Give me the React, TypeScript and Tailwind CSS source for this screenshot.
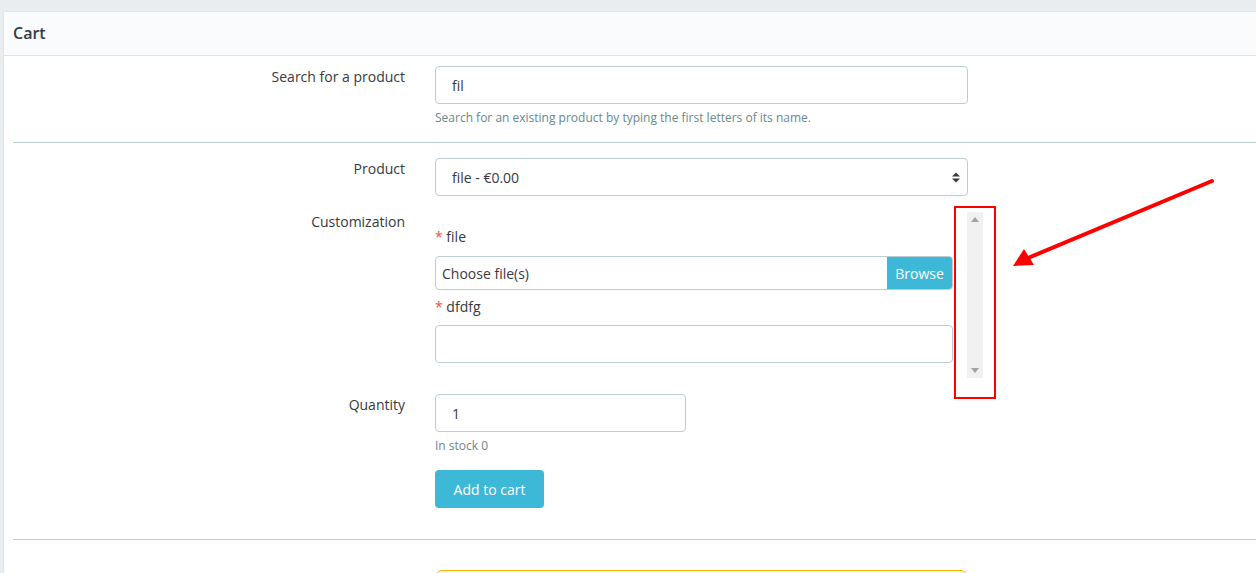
import React from "react";

const Label = ({ children, pt = "pt-[1px]" }: { children: React.ReactNode; pt?: string }) => (
  <div className={`w-[422px] shrink-0 pr-[30px] text-right text-[14px] leading-[20px] text-[#363a41] ${pt}`}>
    {children}
  </div>
);

const Req = ({ children }: { children: React.ReactNode }) => (
  <div className="text-[14px] leading-[20px] text-[#363a41]">
    <span className="text-[#f54c3e]">*</span> {children}
  </div>
);

export default function App() {
  return (
    <div
      className="relative h-[573px] w-[1256px] overflow-hidden bg-[#eaedef] pl-[3px] pt-[11px]"
      style={{ fontFamily: '"Open Sans", "Noto Sans", sans-serif' }}
    >
      <div className="h-[600px] w-[1260px] rounded-tl-[4px] border-l border-t border-[#dbe6e9] bg-white">
        <div className="flex h-[44px] items-center border-b border-[#dbe6e9] bg-[#fafbfc] px-[9px] pb-[1px] text-[16px] font-semibold text-[#363a41]">
          Cart
        </div>
        <div className="pl-[9px] pt-[10px]">
          {/* Search */}
          <div className="flex">
            <Label>Search for a product</Label>
            <div>
              <div className="flex h-[38px] w-[533px] items-center rounded-[4px] border border-[#bbcdd2] px-[16px] text-[14px] text-[#363a41]">
                fil
              </div>
              <div className="mt-[5px] text-[12px] leading-[18px] text-[#6c868e]">
                Search for an existing product by typing the first letters of its name.
              </div>
            </div>
          </div>
          <div className="mt-[15px] h-px bg-[#bbcdd2]" />

          {/* Product */}
          <div className="mt-[15px] flex">
            <Label>Product</Label>
            <div className="flex h-[38px] w-[533px] items-center justify-between rounded-[4px] border border-[#bbcdd2] pl-[16px] pr-[7px] text-[14px] text-[#363a41]">
              <span>file - €0.00</span>
              <svg width="8" height="11" viewBox="0 0 8 11">
                <path d="M0 4.5 L4 0.5 L8 4.5 Z" fill="#363a41" />
                <path d="M0 6.5 L4 10.5 L8 6.5 Z" fill="#363a41" />
              </svg>
            </div>
          </div>

          {/* Customization */}
          <div className="mt-[16px] flex">
            <Label pt="pt-0">Customization</Label>
            <div className="flex h-[166px]">
              <div className="w-[518px] pt-[15px]">
                <Req>file</Req>
                <div className="mt-[9px] flex h-[34px] w-[518px] items-stretch overflow-hidden rounded-[4px] border border-[#bbcdd2]">
                  <div className="flex flex-1 items-center pl-[6px] text-[14px] text-[#363a41]">Choose file(s)</div>
                  <div className="flex w-[65px] items-center justify-center bg-[#3eb8d7] text-[14px] text-white">Browse</div>
                </div>
                <div className="mt-[7px]">
                  <Req>dfdfg</Req>
                </div>
                <div className="mt-[8px] h-[38px] w-[518px] rounded-[4px] border border-[#bbcdd2]" />
              </div>
              <div className="ml-[14px] flex w-[16px] flex-col items-center justify-between bg-[#f1f1f1] py-[5px]">
                <svg width="8" height="5" viewBox="0 0 8 5">
                  <path d="M0 5 L4 0 L8 5 Z" fill="#a3a3a3" />
                </svg>
                <svg width="8" height="5" viewBox="0 0 8 5">
                  <path d="M0 0 L4 5 L8 0 Z" fill="#a3a3a3" />
                </svg>
              </div>
            </div>
          </div>

          {/* Quantity */}
          <div className="mt-[16px] flex">
            <Label>Quantity</Label>
            <div>
              <div className="flex h-[38px] w-[251px] items-center rounded-[4px] border border-[#bbcdd2] px-[16px] text-[14px] text-[#363a41]">
                1
              </div>
              <div className="mt-[5px] text-[12px] leading-[18px] text-[#6c868e]">In stock 0</div>
              <div className="mt-[15px] flex h-[38px] w-[109px] items-center justify-center rounded-[4px] bg-[#3eb8d7] text-[14px] text-white">
                Add to cart
              </div>
            </div>
          </div>
          <div className="mt-[31px] h-px bg-[#bbcdd2]" />

          <div className="mt-[30px] flex">
            <div className="w-[423px] shrink-0" />
            <div className="h-[60px] w-[531px] rounded-[6px] border border-[#fab000] bg-[#fffbf0]" />
          </div>
        </div>
      </div>

      {/* Annotation overlay */}
      <svg className="pointer-events-none absolute left-0 top-0" width="1256" height="573" viewBox="0 0 1256 573">
        <rect x="955" y="207" width="40" height="191" fill="none" stroke="#ff0000" strokeWidth="2" />
        <line x1="1212" y1="181" x2="1028" y2="258" stroke="#ff0000" strokeWidth="4" strokeLinecap="round" />
        <path d="M1013 266 L1024 249 L1034 265 Z" fill="#ff0000" />
      </svg>
    </div>
  );
}
